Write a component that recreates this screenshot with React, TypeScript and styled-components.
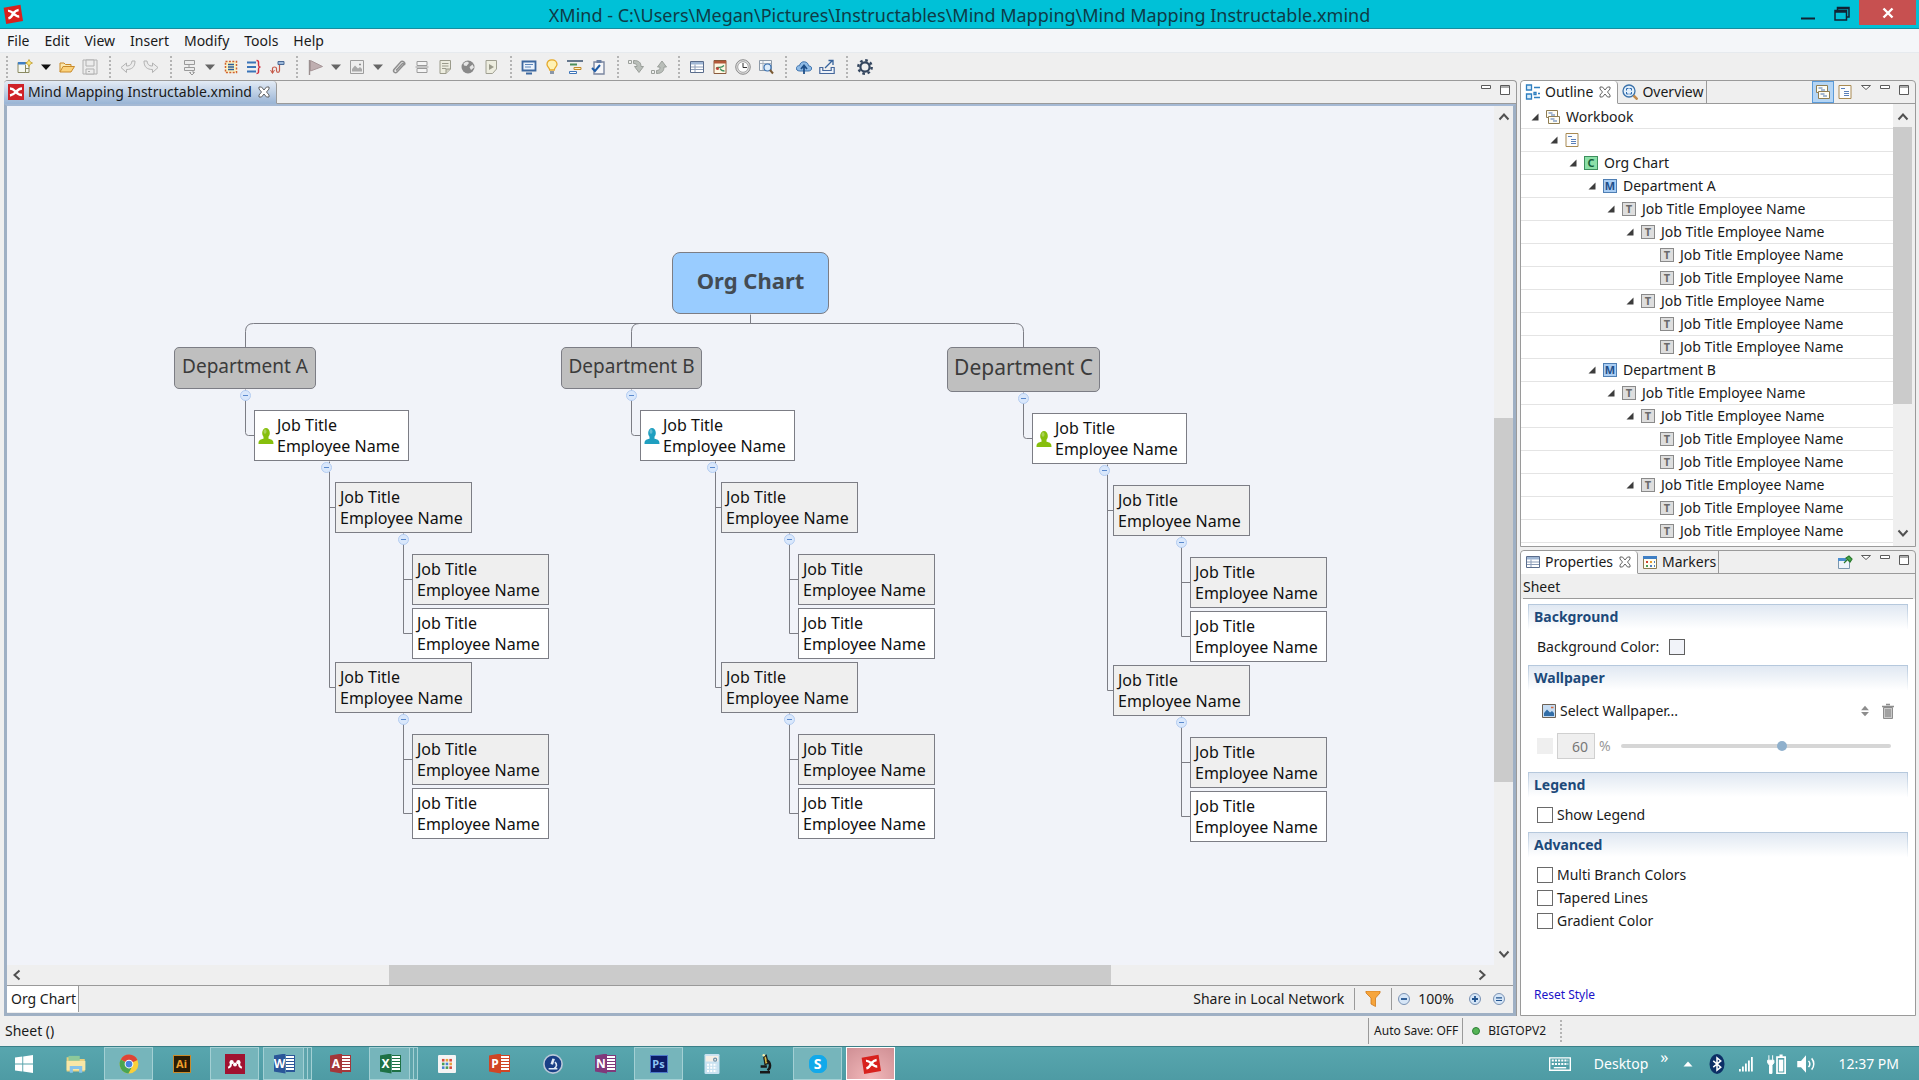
import React from "react";
import styled, { createGlobalStyle, css } from "styled-components";

const GlobalStyle = createGlobalStyle`
  * { box-sizing: border-box; }
  html, body { margin: 0; height: 100%; }
  body {
    font-family: "Noto Sans", "Open Sans", sans-serif;
    font-size: 14px;
    line-height: 20px;
    color: #1a1a1a;
    background: #efefef;
    overflow: hidden;
  }
  button, input {
    font: inherit;
    color: inherit;
    margin: 0;
    padding: 0;
  }
  button { border: 0; background: none; white-space: nowrap; }
  svg { display: block; flex: none; }
  ul, menu { margin: 0; padding: 0; list-style: none; }
`;

const line = "#9a9a9a";

/* ---------- icons ---------- */

const glyphs: Record<string, React.ReactNode> = {
  xmind: (
    <>
      <path d="M.500 3 14 .500l2 13-13.500 2.500z" fill="#d8211d" />
      <path d="M4 5.500c2-.300 3 .800 4.300 2C9.500 5.800 10.500 5 12.500 4.800M4.300 11.500c2-.500 2.800-1.500 4-4 1.700 1.700 2.700 2.700 4.700 2.500" stroke="#fff" strokeWidth="1.900" fill="none" />
    </>
  ),
  xmindSquare: (
    <>
      <path d="M0 0h16v16H0z" fill="#cf2228" />
      <path d="M2 4.500c3 0 4 1.500 6 3.500 2-2.500 3-3.500 6-3.500M2 11.500c3-.500 4-1.500 6-3.500 2 2.500 3 3 6 3" stroke="#fff" strokeWidth="2.400" fill="none" />
    </>
  ),
  newFile: (
    <>
      <path d="M1 3.500h11v10H1z" fill="#f4f7f0" stroke="#8a8a62" />
      <path d="M1 3h8v2.500H1z" fill="#3f7fc4" />
      <path d="M8.500 6v7M9 9.500h3" stroke="#8a8a62" />
      <path d="m12 .500 1.200 2.300L15.500 4l-2.300 1.200L12 7.500l-1.200-2.300L8.500 4l2.300-1.200z" fill="#f9e57a" stroke="#b79420" strokeWidth=".7" />
    </>
  ),
  open: (
    <>
      <path d="M1 13V4h4l1.500 1.500H12V8" fill="#fbe7ae" stroke="#c98a2a" />
      <path d="m1 13 3-5.500h11.500L12 13z" fill="#fbd27c" stroke="#c98a2a" />
    </>
  ),
  save: (
    <g stroke="#b0b0b0" fill="#ececec">
      <path d="M1 1h14v14H1z" />
      <path d="M4 1h8v6H4zM4 10h8v5H4zM6 12.500h2" />
    </g>
  ),
  undo: <path d="M1 8.500 6.500 4v3c4 0 5-2 5.500-5h3c0 6-3 8.500-8.500 8.500v3z" fill="#ececec" stroke="#b3b3b3" />,
  redo: <path d="M15 8.500 9.500 4v3C5.500 7 4.500 5 4 2H1c0 6 3 8.500 8.500 8.500v3z" fill="#ececec" stroke="#b3b3b3" />,
  topic: (
    <g stroke="#9a9a9a" fill="#ececec">
      <path d="M3.500 1.500h10v4h-10zM3.500 8.500h10v3h-10zM8 5.500v3" />
      <path d="M8 11.500h4v2h1.500L11 16l-2.500-2.500H10" />
    </g>
  ),
  boundary: (
    <>
      <path d="M2.500 2.500h11v11h-11z" fill="#fbf3c4" stroke="#d1622d" strokeWidth="1.500" strokeDasharray="2 1.400" />
      <path d="M5 5.500h6M5 8h6M5 10.500h6" stroke="#2d5e99" strokeWidth="1.500" />
    </>
  ),
  summary: (
    <>
      <path d="M1 3.500h9M1 8h9M1 12.500h9" stroke="#3a74b8" strokeWidth="2" />
      <path d="M10.500 1.500c2.500 0 2 1.500 2 3.500s0 3 2 3c-2 0-2 1-2 3s.500 3.500-2 3.500" fill="none" stroke="#cf3040" strokeWidth="1.500" />
    </>
  ),
  relation: (
    <>
      <path d="M3.500 14V9.500c0-2 4-2 4 0v2c0 2.500 3 2.500 3 0V6" fill="none" stroke="#c55a4a" strokeWidth="1.200" />
      <path d="m1.500 11 2 3.500 2-3.500" fill="none" stroke="#c55a4a" />
      <path d="M9 2.500h6v3H9z" fill="#9db9da" stroke="#4a6a96" />
    </>
  ),
  flag: (
    <>
      <path d="M2.500 1v15" stroke="#9a8f8f" strokeWidth="1.400" />
      <path d="m3.500 1.500 12 6-12 4.500z" fill="#bfaeb0" stroke="#a79698" />
    </>
  ),
  picture: (
    <>
      <path d="M1.500 1.500h13v13h-13z" fill="#ededed" stroke="#9d9d9d" />
      <path d="M3 12.500V10l3-3.500 3 3 2-1.500 2 2v2.500z" fill="#a8a8a8" />
      <path d="M10 5.500h2" stroke="#8d8d8d" strokeWidth="1.500" />
    </>
  ),
  wallpaper: (
    <>
      <path d="M1.500 1.500h13v13h-13z" fill="#c6dcf2" stroke="#6d6256" />
      <path d="M3 13v-3l3-3.500 3 3L11 8l2 2v3z" fill="#326ea8" />
      <path d="M10 4.500h2.500" stroke="#d8683c" strokeWidth="1.500" />
    </>
  ),
  clip: (
    <path
      d="m5 11.500 6-6.500c1-1.200 2.300 0 1.300 1.200L6 13c-1.700 1.800-4.500-.300-3-2.500l6.500-7.300c2-2.200 5.500.300 3.800 3"
      fill="none"
      stroke="#8e8e8e"
      strokeWidth="1.500"
    />
  ),
  divider: <path d="M3 2.500h10v4H3zM3 9.500h10v4H3zM1.500 8h13" fill="#f4f4f4" stroke="#9a9a9a" />,
  note: (
    <>
      <path d="M3 1.500h10.500V10L9 14.500H3z" fill="#ededdf" stroke="#9b9b8b" />
      <path d="M5 4.500h6.500M5 7h6.500M5 9.500h4" stroke="#9b9b8b" />
      <path d="M13.500 10H9v4.500" fill="#cfcfc0" stroke="#9b9b8b" />
    </>
  ),
  globe: (
    <>
      <circle cx="8" cy="8" r="6.500" fill="#898989" />
      <path d="M3.500 4.500C6 2 8 2.500 9 4L6.500 7 4 6.500zM9.500 8l3-2.500 1.500 3L11 11z" fill="#e6e6e6" />
    </>
  ),
  audio: (
    <>
      <path d="M3 1.500h10.500V10L9.500 14.500H3z" fill="#ededdf" stroke="#a0a092" />
      <path d="m6 5 5 3-5 3z" fill="#9b9b8b" />
    </>
  ),
  present: (
    <>
      <path d="M1.500 2.500h13v9h-13z" fill="#eaf2fb" stroke="#3c68a0" strokeWidth="1.800" />
      <path d="M4 5.500h8M4 8h6" stroke="#5d86ba" />
      <path d="M5 14.500h6" stroke="#3c68a0" strokeWidth="2" />
    </>
  ),
  bulb: (
    <>
      <path d="M8 .800c3 0 5 2 5 4.500S10.500 8.500 10.300 11H5.700C5.500 8.500 3 8 3 5.300S5 .800 8 .800z" fill="#fff2b4" stroke="#e5a92a" strokeWidth="1.300" />
      <path d="M6 12h4v3H6z" fill="#8b97a8" />
    </>
  ),
  gantt: (
    <>
      <path d="M0 2h16" stroke="#39506e" strokeWidth="1.500" />
      <path d="M3 4.500h7v2H3z" fill="#4c8f5a" />
      <path d="M7 8.500h7v2H7z" fill="#fff1c0" stroke="#c28a2a" />
      <path d="M2.500 12.500h7v2h-7z" fill="#fff" stroke="#3c74b8" />
    </>
  ),
  task: (
    <>
      <path d="M4 3h10v12H4z" fill="#f6f6f8" stroke="#7b87a0" strokeWidth="1.400" />
      <path d="M6.500 1h5v3h-5z" fill="#6a7fa2" />
      <path d="m2 9 3 3 5-6" fill="none" stroke="#1d5ba6" strokeWidth="2" />
    </>
  ),
  drillDown: (
    <g stroke="#9a9f9a" fill="#b9beb9">
      <path d="M.500 1.500h3v3h-3z" fill="none" />
      <path d="M5.500 1.500c5.500 0 7.500 2 7.500 6h2.500l-4.500 6-4.500-6H9c0-2-1-3-3.500-3z" />
    </g>
  ),
  drillUp: (
    <g stroke="#9a9f9a" fill="#b9beb9">
      <path d="M.500 11.500h3v3h-3z" fill="none" />
      <path d="M5.500 14.500c5.500 0 7.500-2.500 7.500-6.500h2.500L11 2 6.500 8H9c0 2.500-1 3.500-3.500 3.500z" />
    </g>
  ),
  table: (
    <>
      <path d="M1.500 2.500h13v11h-13z" fill="#fff" stroke="#5a6d8c" />
      <path d="M2 3h12v2.500H2z" fill="#9fb6d4" />
      <path d="M2 8h12M2 10.500h12M6 5.500V13" stroke="#8c9db8" />
    </>
  ),
  sheetMap: (
    <>
      <path d="M2 1.500h12v13H2z" fill="#fff8e4" stroke="#8a5a3c" />
      <path d="M2 2h12v2.500H2z" fill="#b3593a" />
      <path d="M4 9.500c2-3 4 1 8-3M8 9.500c1 2 2 2.500 4.500 2.500" stroke="#3f8f5f" strokeWidth="1.300" fill="none" />
      <circle cx="5.500" cy="9.500" r="1.500" fill="#c2413a" />
    </>
  ),
  clock: (
    <>
      <circle cx="8" cy="8" r="7.300" fill="#dcdcdc" stroke="#8d8d8d" />
      <circle cx="8" cy="8" r="5.300" fill="#fdfdfd" stroke="#a8a8a8" />
      <path d="M8 4v4.500h4" stroke="#333" fill="none" />
    </>
  ),
  searchSheet: (
    <>
      <path d="M1.500 1.500h12v10h-12z" fill="#f4f6f8" stroke="#8d9aa8" />
      <path d="M2 4.500h11M5 2v9" stroke="#a8b3c0" />
      <circle cx="9.500" cy="8.500" r="3.500" fill="#dcecfb" stroke="#3d74b4" strokeWidth="1.200" />
      <path d="m12 11 3 3.500" stroke="#7a5a34" strokeWidth="2" />
    </>
  ),
  cloud: (
    <>
      <path d="M4 12C1 12 0 10.500.500 8.500 1 7 2.500 6.500 3.500 6.700 4 4 6 2.500 8.500 2.800c2.500.200 3.800 2 4 4C15 7 16 8.500 15.500 10c-.400 1.500-1.500 2-3.500 2z" fill="#8fbbe6" stroke="#3f74ae" />
      <path d="M8 15V7M5 10l3-3.500L11 10" fill="none" stroke="#1f4f88" strokeWidth="1.800" />
    </>
  ),
  share: (
    <>
      <path d="M.800 8.500v6h14.400v-6h-3v3H3.800v-3z" fill="#eef3fa" stroke="#46689c" strokeWidth="1.200" />
      <path d="m6 9 7-7M9.500 1.500H14V6" fill="none" stroke="#35629c" strokeWidth="1.300" />
    </>
  ),
  gear: (
    <g fill="none" stroke="#33455e">
      <circle cx="8" cy="8" r="4.600" strokeWidth="2.200" />
      <circle cx="8" cy="8" r="6.700" strokeWidth="2.400" strokeDasharray="2.600 2.662" />
    </g>
  ),
  outline: (
    <g fill="#d9edfb" stroke="#2f7fc0" strokeWidth="1.300">
      <path d="M1.500 1h5v5h-5zM1.500 10h5v5h-5z" />
      <path d="M9 3.500h6M9 8.500h2v2H9zM13 9.500h2M9 13.500h6" fill="none" />
    </g>
  ),
  overview: (
    <>
      <circle cx="7" cy="7" r="6" fill="#e2effb" stroke="#3b72aa" strokeWidth="1.300" />
      <path d="M4.500 6.500v-2h2M9.500 6.500v-2h-2M4.500 8v2h2M9.500 8v2h-2" fill="none" stroke="#2c6ab0" />
      <path d="m11.500 11.500 4 4" stroke="#c28a4c" strokeWidth="2.500" />
    </>
  ),
  workbook: (
    <>
      <path d="M1.500 1.500h11v7h-11z" fill="#fffdf4" stroke="#8f7d52" />
      <path d="M3.500 7.500h11v7h-11z" fill="#fffdf4" stroke="#8f7d52" />
      <path d="M3.500 4h4M6 6h4M5.500 10h4M8 12h4" stroke="#4c74b0" strokeWidth="1.200" />
    </>
  ),
  sheet: (
    <>
      <path d="M2 1.500h12v13H2z" fill="#fdfdfd" stroke="#a98a52" />
      <path d="M4 4.500h4M7 7.500h5M7 9.500h5M7 11.500h5" stroke="#5a7fb8" />
    </>
  ),
  properties: (
    <>
      <path d="M1.500 2.500h13v11h-13z" fill="#fff" stroke="#5a6d8c" />
      <path d="M2 3h12v2.500H2z" fill="#9fb6d4" />
      <path d="M2 8h12M2 10.500h12M6 5.500V13" stroke="#8c9db8" />
    </>
  ),
  markers: (
    <>
      <path d="M1.500 2.500h13v12h-13z" fill="#fffdf0" stroke="#8a7a52" />
      <path d="M1 2h14v3H1z" fill="#3f7fc4" />
      <path d="M4 7h2v2H4z" fill="#d0402f" />
      <path d="M8 7h2v2H8z" fill="#e59a2d" />
      <path d="M4 11h2v2H4z" fill="#4a9b56" />
      <path d="M8 11h2v2H8zM12 7h1v2h-1zM12 11h1v2h-1z" fill="#4f7fc0" />
    </>
  ),
  pin: (
    <>
      <path d="M1.500 4.500h11v10h-11z" fill="#eef4fb" stroke="#7b97ae" />
      <path d="M1 4h8v3H1z" fill="#4b8fd0" />
      <path d="m7 9 3-3M9 4l4 4 2-3-3-3z" fill="#4aa84a" stroke="#2a7a2e" strokeWidth="1.200" />
    </>
  ),
  closeX: (
    <path d="M3 3h2.500L8 6l2.500-3H13v2L10.500 8l2.500 3v2h-2.500L8 10l-2.500 3H3v-2l2.500-3L3 5z" fill="#fff" stroke="#555" strokeWidth=".9" />
  ),
  minimize: <path d="M3.500 3.500h9v3h-9z" fill="#fff" stroke="#5a5a5a" />,
  maximize: (
    <>
      <path d="M3.500 3.500h9v9h-9z" fill="#fff" stroke="#5a5a5a" />
      <path d="M3.500 5h9" stroke="#5a5a5a" />
    </>
  ),
  viewMenu: <path d="M3.500 3.500h9L8 7.500z" fill="#fff" stroke="#5a5a5a" />,
  caretUp: <path d="m3.500 10.500 4.500-5 4.500 5" fill="none" stroke="#505050" strokeWidth="2" />,
  caretDown: <path d="m3.500 5.500 4.500 5 4.500-5" fill="none" stroke="#505050" strokeWidth="2" />,
  caretLeft: <path d="m10.500 3.500-5 4.500 5 4.500" fill="none" stroke="#505050" strokeWidth="2" />,
  caretRight: <path d="m5.500 3.500 5 4.500-5 4.500" fill="none" stroke="#505050" strokeWidth="2" />,
  dropdown: <path d="M3 5.500h10L8 11z" fill="currentColor" />,
  treeArrow: <path d="M11.500 4.500v7h-7z" fill="#3c3c3c" />,
  spinner: <path d="M3.500 7 8 2l4.500 5zM3.500 9 8 14l4.500-5z" fill="#8d8d8d" />,
  trash: (
    <>
      <path d="M3.500 4.500h9v11h-9z" fill="#c9c9c9" stroke="#8d8d8d" />
      <path d="M2 3.500h12M6 1.500h4M6 6v8M8 6v8M10 6v8" stroke="#8d8d8d" strokeWidth="1.300" />
    </>
  ),
  funnel: <path d="M1 0h14v2L10.500 7v8.500L6 13V7L1 2z" fill="#f6a53c" stroke="#cf7a1a" strokeWidth=".8" />,
  zoomOut: (
    <>
      <circle cx="8" cy="8" r="5.500" fill="#d6e6f7" stroke="#7b93b4" />
      <path d="M5 8h6" stroke="#23548f" strokeWidth="1.800" />
    </>
  ),
  zoomIn: (
    <>
      <circle cx="8" cy="8" r="5.500" fill="#d6e6f7" stroke="#7b93b4" />
      <path d="M5 8h6M8 5v6" stroke="#23548f" strokeWidth="1.800" />
    </>
  ),
  zoomFit: (
    <>
      <circle cx="8" cy="8" r="5.500" fill="#d6e6f7" stroke="#7b93b4" />
      <path d="M5 6.800h6M5 9.500h6" stroke="#23548f" strokeWidth="1.200" />
    </>
  ),
  dot: <circle cx="8" cy="8" r="3.500" fill="#55b455" stroke="#2f7f39" />,
  winMin: <path d="M1 13.500h14" stroke="#123" strokeWidth="2" />,
  winRestore: <path d="M1 5.500h11.500V15H1zM1 7h11.500M3.500 5V2.500H15V12h-2M3.500 3.500H15" fill="none" stroke="#123" strokeWidth="1.500" />,
  winClose: <path d="m3.500 3.500 9 9M12.500 3.500l-9 9" stroke="#fff" strokeWidth="2.400" />,
  person: (
    <>
      <ellipse cx="8" cy="5" rx="3.800" ry="5" />
      <path d="M.500 16c0-3.500 1-4.500 5-5.300V9h5v1.700c4 .800 5 1.800 5 5.300z" />
      <ellipse cx="7" cy="3.500" rx="1.500" ry="2.300" fill="#fff" opacity=".3" />
    </>
  ),
  windows: <path d="M0 2.300 6.500 1.400V7.600H0zM7.300 1.300 16 0v7.600H7.300zM0 8.400h6.500v6.200L0 13.700zM7.300 8.400H16V16l-8.700-1.300z" fill="#fff" />,
  explorer: (
    <>
      <path d="M.500 2.500h6l1 1.500h7.500v10H.500z" fill="#e9cf7c" />
      <path d="M2 1.500h9v4H2z" fill="#8dc99a" />
      <path d="M.500 5.500H15.500v7.500H.500z" fill="#f8e7a6" />
      <path d="M3 9.500h10V15h-2.500v-3h-5v3H3z" fill="#85c3ea" />
    </>
  ),
  chrome: (
    <>
      <circle cx="8" cy="8" r="7.500" fill="#f9cf3a" />
      <path d="M8 8 1.400 4.300A7.600 7.600 0 0 1 14.800 4.700z" fill="#dd4436" />
      <path d="M8 8 1.400 4.300A7.600 7.600 0 0 0 7.500 15.500L10 11z" fill="#4aa550" />
      <circle cx="8" cy="8" r="3.500" fill="#fff" />
      <circle cx="8" cy="8" r="2.700" fill="#4683e0" />
    </>
  ),
  mendeley: (
    <>
      <path d="M0 0h16v16H0z" fill="#a01230" />
      <circle cx="5.300" cy="6.500" r="1.700" fill="#fff" />
      <circle cx="10.700" cy="6.500" r="1.700" fill="#fff" />
      <circle cx="8" cy="8.300" r="1.600" fill="#fff" />
      <path d="M4.500 7c.500 2-.500 3.500-2 4M11.500 7c-.500 2 .500 3.500 2 4" fill="none" stroke="#fff" strokeWidth="1.600" />
    </>
  ),
  apps: (
    <>
      <rect width="16" height="16" rx="1" fill="#f4f4f4" />
      {["#d9483b", "#e9a13b", "#d9483b", "#4a9b56", "#4a80d0", "#e9a13b", "#4a80d0", "#4a9b56", "#d9483b"].map((fill, i) => (
        <rect key={i} x={3.5 + (i % 3) * 3.3} y={3.5 + Math.floor(i / 3) * 3.3} width="2.300" height="2.300" fill={fill} />
      ))}
    </>
  ),
  lab: (
    <>
      <circle cx="8" cy="8" r="7.300" fill="#193f86" stroke="#b9c8d8" strokeWidth="1.300" />
      <path d="m7.500 3.500 2 .500-1.500 4.500-2-.500z" fill="#dfe9f5" />
      <path d="M9.500 6.500c2 1.500 1.500 4-.500 5M4.500 11.800h7" fill="none" stroke="#dfe9f5" strokeWidth="1.300" />
    </>
  ),
  calculator: (
    <>
      <rect x="2" y="0" width="12" height="16" rx="1" fill="#c9e2f1" />
      <path d="M3 1.500h10v4.500H3z" fill="#f7efe6" />
      <path d="M4 8.500h8M4 11h8M4 13.500h8" stroke="#fff" strokeWidth="1.600" strokeDasharray="1.600 1" />
      <circle cx="10.500" cy="4.500" r="1.200" fill="none" stroke="#6d8fa8" />
    </>
  ),
  microscope: (
    <>
      <path d="M7 2.500 9 1l1.500 6.500-2.500 1z" fill="#d9b945" stroke="#1d1d1d" />
      <path d="M9.500 5c3 1.500 3.500 6 .500 8M4.500 10h5M4 14.500h8" fill="none" stroke="#181818" strokeWidth="2" />
      <circle cx="7" cy="1" r="1" fill="#f6f0b0" />
    </>
  ),
  keyboard: (
    <>
      <path d="M.500 3.500h15v9H.500z" fill="none" stroke="#fff" />
      <path d="M2 5.500h12M2 8h12" stroke="#fff" strokeWidth="1.500" strokeDasharray="1.500 .8" />
      <path d="M3.500 10.700h9" stroke="#fff" />
    </>
  ),
  showHidden: <path d="m3.500 10.500 4.500-5 4.500 5z" fill="#fff" />,
  bluetooth: (
    <>
      <ellipse cx="8" cy="8" rx="6" ry="8" fill="#0c2f66" />
      <path d="m5 5.500 6 5L8 13V3l3 2.500-6 5" fill="none" stroke="#fff" strokeWidth="1.200" />
    </>
  ),
  signal: <path d="M1 13h1.800v2.500H1zM4 10.500h1.800v5H4zM7 7.500h1.800v8H7zM10 4.500h1.800v11H10zM13 1h1.800v14.500H13z" fill="#fff" />,
  battery: (
    <>
      <path d="M8 2.500h6.500v13H8zM10 1h2.500" fill="none" stroke="#fff" strokeWidth="1.400" />
      <path d="M9.500 4.500H13V14H9.500z" fill="#fff" />
      <path d="M1.500 1v4M4.500 1v4M.500 5h5v2l-1.500 2v6.500H2V9L.500 7z" fill="#fff" stroke="#fff" strokeWidth=".8" />
    </>
  ),
  volume: (
    <>
      <path d="M1 5.500h3L8 1v14l-4-4.500H1z" fill="#fff" />
      <path d="M10 5.500c1.300 1.500 1.300 3.500 0 5M12.500 3.500c2.300 2.500 2.300 6.500 0 9" fill="none" stroke="#fff" strokeWidth="1.200" />
    </>
  ),
};

const Icon = ({ name, size = 16, fill }: { name: string; size?: number; fill?: string }) => (
  <svg width={size} height={size} viewBox="0 0 16 16" fill={fill} aria-hidden="true">
    {glyphs[name]}
  </svg>
);

/* ---------- window chrome ---------- */

const Desktop = styled.div`
  display: flex;
  flex-direction: column;
  height: 100vh;
`;

const TitleBar = styled.header`
  flex: none;
  display: grid;
  grid-template-columns: 1fr auto 1fr;
  height: 29px;
  padding: 0 3px;
  background: #00c1d7;
  border-bottom: 1px solid #158ea0;
  color: #0e3c47;
`;

const TitleIcon = styled.span`
  padding: 4px 0;
`;

const Title = styled.h1`
  margin: 0;
  font-size: 18px;
  line-height: 30px;
  font-weight: 400;
  white-space: nowrap;
`;

const WindowButtons = styled.div`
  display: flex;
  justify-content: flex-end;
`;

const WindowButton = styled.button<{ $close?: boolean }>`
  display: grid;
  place-items: center;
  width: ${(p) => (p.$close ? 57 : 34)}px;
  height: 25px;
  background: ${(p) => (p.$close ? "#c75050" : "transparent")};
`;

const MenuBar = styled.nav`
  flex: none;
  display: flex;
  gap: 15px;
  height: 24px;
  padding: 0 7px;
  background: #f4f6f9;
  border-bottom: 1px solid #e6eaee;

  button { line-height: 24px; }
`;

const Toolbar = styled.div`
  flex: none;
  display: flex;
  gap: 8px;
  height: 27px;
  padding-left: 6px;
`;

const ToolGroup = styled.div`
  display: flex;
  align-items: center;

  &::before {
    content: "";
    width: 2px;
    height: 22px;
    margin-right: 5px;
    background: repeating-linear-gradient(#b4b4b4 0 2px, transparent 2px 4px);
  }
`;

const ToolButton = styled.button<{ $narrow?: boolean; $dim?: boolean }>`
  display: grid;
  place-items: center;
  width: ${(p) => (p.$narrow ? 19 : 23)}px;
  height: 26px;
  color: ${(p) => (p.$dim ? "#666" : "#111")};
`;

const Workspace = styled.main`
  flex: 1;
  min-height: 0;
  display: flex;
  gap: 3px;
  padding: 0 3px 0 4px;
`;

/* ---------- shared panel parts ---------- */

const TabStrip = styled.div`
  flex: none;
  display: flex;
  height: 23px;
  border-bottom: 1px solid ${line};
`;

const Tab = styled.button<{ $kind?: "editor" | "active" }>`
  display: flex;
  align-items: center;
  gap: 4px;
  height: 23px;
  padding: 0 2px 0 4px;
  border-right: 1px solid ${line};
  border-bottom: 1px solid ${line};
  ${(p) =>
    p.$kind === "active" &&
    css`
      background: #fff;
      border-bottom-color: #fff;
      border-radius: 4px 4px 0 0;
      padding-right: 4px;
    `}
  ${(p) =>
    p.$kind === "editor" &&
    css`
      background: linear-gradient(#e3ebf5, #9cb6d6);
      border-bottom-color: #9cb6d6;
      border-radius: 4px 4px 0 0;
      padding-right: 4px;
    `}
`;

const PanelTools = styled.div`
  display: flex;
  align-items: flex-start;
  margin-left: auto;
  padding-right: 2px;
`;

const PanelButton = styled.button<{ $on?: boolean; $wide?: boolean }>`
  display: grid;
  place-items: center;
  width: ${(p) => (p.$wide ? 22 : 19)}px;
  height: ${(p) => (p.$wide ? 22 : 18)}px;
  border: 1px solid ${(p) => (p.$on ? "#5a9ad8" : "transparent")};
  background: ${(p) => (p.$on ? "#b4d5f5" : "transparent")};
`;

const Scroll = styled.div<{ $horizontal?: boolean }>`
  flex: none;
  display: flex;
  flex-direction: ${(p) => (p.$horizontal ? "row" : "column")};
  ${(p) => (p.$horizontal ? "height: 20px;" : "width: 19px;")}
  background: #efefef;

  button {
    flex: none;
    display: grid;
    place-items: center;
    ${(p) => (p.$horizontal ? "width: 20px;" : "height: 21px;")}
  }
`;

const ScrollPart = styled.span<{ $grow: number; $thumb?: boolean }>`
  flex: ${(p) => p.$grow} 1 0;
  background: ${(p) => (p.$thumb ? "#cbcbcb" : "transparent")};
`;

const ScrollBar = ({ parts, horizontal }: { parts: number[]; horizontal?: boolean }) => (
  <Scroll $horizontal={horizontal}>
    <button aria-label={horizontal ? "Scroll left" : "Scroll up"}>
      <Icon name={horizontal ? "caretLeft" : "caretUp"} />
    </button>
    <ScrollPart $grow={parts[0]} />
    <ScrollPart $grow={parts[1]} $thumb />
    <ScrollPart $grow={parts[2]} />
    <button aria-label={horizontal ? "Scroll right" : "Scroll down"}>
      <Icon name={horizontal ? "caretRight" : "caretDown"} />
    </button>
  </Scroll>
);

/* ---------- editor ---------- */

const Editor = styled.section`
  flex: 1;
  min-width: 0;
  display: flex;
  flex-direction: column;
  border: 1px solid ${line};
  border-width: 1px 1px 0 0;
  border-radius: 4px 4px 0 0;
`;

const EditorFrame = styled.div`
  flex: 1;
  min-height: 0;
  display: flex;
  flex-direction: column;
  border: 3px solid #9fb0c4;
  border-top-color: #a5b9d4;
  border-top-width: 2px;
`;

const CanvasRow = styled.div`
  flex: 1;
  min-height: 0;
  display: flex;
`;

const Canvas = styled.div`
  position: relative;
  flex: 1;
  overflow: hidden;
  background: #f1f3f9;
`;

const ScrollRow = styled.div`
  display: flex;
  padding-right: 21px;
  background: #efefef;

  > div { flex: 1; }
`;

const SheetBar = styled.footer`
  flex: none;
  display: flex;
  height: 28px;
  padding-bottom: 1px;
  border-top: 1px solid ${line};
  background: #efefef;
`;

const SheetTab = styled.button`
  padding: 0 2px 0 4px;
  background: #fff;
  border-right: 1px solid ${line};
`;

const SheetTools = styled.div`
  display: flex;
  align-items: center;
  margin-left: auto;
  padding-right: 2px;
`;

const SheetTool = styled.button<{ $split?: boolean }>`
  display: flex;
  align-items: center;
  height: 22px;
  padding: 0 4px;
  ${(p) =>
    p.$split &&
    css`
      padding: 0 10px;
      border-right: 1px solid ${line};
    `}
`;

const ZoomLevel = styled.output`
  margin: 0 9px 0 2px;
`;

/* ---------- mind map ---------- */

type Kind = "root" | "dept" | "deptLarge" | "white" | "grey";

const Node = styled.div<{ $x: number; $y: number; $w: number; $h: number; $kind: Kind }>`
  position: absolute;
  left: ${(p) => p.$x}px;
  top: ${(p) => p.$y}px;
  width: ${(p) => p.$w}px;
  height: ${(p) => p.$h}px;
  display: flex;
  align-items: center;
  gap: 3px;
  padding-left: 4px;
  border: 1px solid #7c7d85;
  background: ${(p) => (p.$kind === "white" ? "#fff" : "#efefef")};
  color: #111;
  font-size: 16px;
  line-height: 21px;
  white-space: nowrap;

  svg { margin-left: -1px; }

  ${(p) =>
    p.$kind.startsWith("dept") &&
    css`
      justify-content: center;
      padding: 0 0 4px;
      border-radius: 5px;
      background: #bfbfbf;
      color: #3b3b3b;
      font-size: ${p.$kind === "dept" ? 19 : 21}px;
    `}
  ${(p) =>
    p.$kind === "root" &&
    css`
      justify-content: center;
      padding: 0 0 6px;
      border-radius: 8px;
      background: #99ccff;
      color: #434b53;
      font-size: 22px;
      font-weight: 700;
    `}
`;

const Links = styled.svg`
  position: absolute;
  inset: 0;
`;

const Fold = styled.button<{ $x: number; $y: number }>`
  position: absolute;
  left: ${(p) => p.$x - 5}px;
  top: ${(p) => p.$y - 5}px;
  display: grid;
  place-items: center;
  width: 11px;
  height: 11px;
  border: 1px solid #b4cdf2;
  border-radius: 50%;
  background: #d9e7fb;

  &::before {
    content: "";
    width: 5px;
    height: 1px;
    background: #5b8ace;
  }
`;

const Employee = () => (
  <span>
    Job Title
    <br />
    Employee Name
  </span>
);

interface Department {
  name: string;
  x: number;
  drop: number;
  left: number;
  width: number;
  kind: Kind;
  person: string;
}

/* Canvas coordinates; x is the vertical trunk of a department, drop shifts what hangs below it. */
const departments: Department[] = [
  { name: "Department A", x: 238, drop: 0, left: 167, width: 142, kind: "dept", person: "#86bf0d" },
  { name: "Department B", x: 624, drop: 0, left: 554, width: 141, kind: "dept", person: "#1f9fc0" },
  { name: "Department C", x: 1016, drop: 3, left: 940, width: 153, kind: "deptLarge", person: "#86bf0d" },
];

const Branch = ({ dept }: { dept: Department }) => {
  const { x, drop } = dept;
  return (
    <>
      <Node $kind={dept.kind} $x={dept.left} $y={241} $w={dept.width} $h={42 + drop}>
        {dept.name}
      </Node>
      <Fold $x={x} $y={289 + drop} aria-label={`Fold ${dept.name}`} />
      <Node $kind="white" $x={x + 9} $y={304 + drop} $w={155} $h={51}>
        <Icon name="person" fill={dept.person} />
        <Employee />
      </Node>
      <Fold $x={x + 81} $y={361 + drop} aria-label="Fold topic" />
      {[0, 180].map((dy) => (
        <React.Fragment key={dy}>
          <Node $kind="grey" $x={x + 90} $y={376 + drop + dy} $w={137} $h={51}>
            <Employee />
          </Node>
          <Fold $x={x + 158} $y={433 + drop + dy} aria-label="Fold topic" />
          <Node $kind="grey" $x={x + 167} $y={448 + drop + dy} $w={137} $h={51}>
            <Employee />
          </Node>
          <Node $kind="white" $x={x + 167} $y={502 + drop + dy} $w={137} $h={51}>
            <Employee />
          </Node>
        </React.Fragment>
      ))}
    </>
  );
};

const branchPath = ({ x, drop }: Department) => {
  const sub = [0, 180]
    .map((dy) => `M${x + 158} ${427 + drop + dy}v100h9M${x + 158} ${473 + drop + dy}h9`)
    .join("");
  return `M${x} ${283 + drop}v43q0 3 3 3h6M${x + 84} ${355 + drop}v226h6M${x + 84} ${401 + drop}h6${sub}`;
};

const MindMap = () => (
  <Canvas>
    <Links width="1300" height="760" fill="none" stroke="#7c7d85">
      <g transform="translate(.5 .5)">
        <path d="M743 208v9M238 241v-16q0-8 8-8h762q8 0 8 8v16M624 241v-16q0-8 8-8" />
        {departments.map((d) => (
          <path key={d.name} d={branchPath(d)} />
        ))}
      </g>
    </Links>
    <Node $kind="root" $x={665} $y={146} $w={157} $h={62}>
      Org Chart
    </Node>
    {departments.map((d) => (
      <Branch key={d.name} dept={d} />
    ))}
  </Canvas>
);

/* ---------- side views ---------- */

const Side = styled.aside`
  flex: none;
  display: flex;
  flex-direction: column;
  gap: 3px;
  width: 396px;
`;

const Panel = styled.section<{ $grow?: boolean }>`
  display: flex;
  flex-direction: column;
  min-height: 0;
  ${(p) => p.$grow && "flex: 1;"}
  border: 1px solid ${line};
  border-radius: 4px 4px 0 0;
`;

const TreeArea = styled.div`
  display: flex;
  padding: 2px 3px 3px 0;
  background: linear-gradient(to left, #efefef 22px, #fff 22px);
`;

const Tree = styled.ul`
  flex: 1;
`;

const TreeRow = styled.li<{ $level: number }>`
  display: flex;
  align-items: center;
  height: 23px;
  padding-left: ${(p) => 6 + p.$level * 19}px;
  border-bottom: 1px solid #e4e4e4;
  background: #fff;
  white-space: nowrap;
`;

const Twisty = styled.span`
  width: 16px;
  margin-right: 2px;
`;

const RowIcon = styled.span`
  width: 16px;
  margin-right: 5px;
`;

const Letter = styled.span<{ $tone: "C" | "M" | "T" }>`
  display: grid;
  place-items: center;
  width: 14px;
  height: 14px;
  margin: 0 6px 0 1px;
  border: 1px solid ${(p) => ({ C: "#3d8f5d", M: "#4f7fb4", T: "#8a8a8a" })[p.$tone]};
  background: ${(p) => ({ C: "#8ce0a8", M: "#a9cdf3", T: "#dedede" })[p.$tone]};
  color: ${(p) => ({ C: "#14603a", M: "#1f4f8b", T: "#6b6b6b" })[p.$tone]};
  font-size: 11px;
  font-weight: 700;
  line-height: 12px;
`;

const job = "Job Title Employee Name";
const team: [number, string, string][] = [
  [4, "T", job],
  [5, "T", job],
  [6, "T", job],
  [6, "T", job],
  [5, "T", job],
  [6, "T", job],
  [6, "T", job],
];
const outlineRows: [number, string, string][] = [
  [0, "workbook", "Workbook"],
  [1, "sheet", ""],
  [2, "C", "Org Chart"],
  [3, "M", "Department A"],
  ...team,
  [3, "M", "Department B"],
  ...team,
];

const SheetLabel = styled.div`
  margin: 0 2px;
  padding-top: 1px;
  line-height: 23px;
  border-bottom: 1px solid ${line};
`;

const Form = styled.form`
  flex: 1;
  display: flex;
  flex-direction: column;
  padding: 5px 7px 11px;
  background: #fff;
`;

const SectionHead = styled.h2`
  height: 25px;
  margin: 0;
  padding-left: 5px;
  border: 1px solid #b4c7dc;
  border-bottom: 0;
  border-image: linear-gradient(#b4c7dc, #fff) 1;
  background: linear-gradient(#e0e8f2, #fff);
  color: #1d4a7a;
  font-size: 14px;
  line-height: 24px;
`;

const SectionBody = styled.div`
  padding: 6px 9px 6px;
`;

const Row = styled.div<{ $h?: number }>`
  display: flex;
  align-items: center;
  gap: 4px;
  height: ${(p) => p.$h ?? 23}px;
`;

const Check = styled.input<{ $blank?: boolean }>`
  appearance: none;
  width: 16px;
  height: 16px;
  border: 1px solid ${(p) => (p.$blank ? "#efefef" : "#6a6a6a")};
  background: ${(p) => (p.$blank ? "#efefef" : "#fff")};
`;

const Swatch = styled.button`
  width: 16px;
  height: 16px;
  margin-left: 6px;
  border: 1px solid #5f5f5f;
  background: #f1f3f9;
`;

const WallpaperButton = styled.button`
  display: flex;
  flex: 1;
  align-items: center;
  gap: 3px;
  padding-left: 4px;

  svg:last-child { margin-left: auto; }
`;

const Percent = styled.input`
  width: 38px;
  height: 26px;
  padding-right: 6px;
  border: 1px solid #d0d0d0;
  background: #efefef;
  color: #777;
  text-align: right;
`;

const Unit = styled.label`
  color: #999;
  margin-right: 6px;
`;

const Slider = styled.input`
  appearance: none;
  flex: 1;
  height: 4px;
  margin-right: 8px;
  border-radius: 2px;
  background: #d6d6d6;

  &::-webkit-slider-thumb {
    appearance: none;
    width: 10px;
    height: 10px;
    border-radius: 50%;
    background: #8fb0cc;
  }
`;

const ResetLink = styled.a`
  margin: auto 0 0 6px;
  color: #1a12c8;
  font-size: 12px;
  line-height: 18px;
  text-decoration: none;
`;

const CheckRow = ({ id, label }: { id: string; label: string }) => (
  <Row>
    <Check type="checkbox" id={id} />
    <label htmlFor={id}>{label}</label>
  </Row>
);

/* ---------- status bar and taskbar ---------- */

const StatusBar = styled.footer`
  flex: none;
  display: flex;
  align-items: center;
  height: 30px;
  padding: 0 357px 0 5px;
`;

const StatusCell = styled.div<{ $first?: boolean }>`
  display: flex;
  align-items: center;
  gap: 4px;
  height: 26px;
  padding: 0 4px 0 5px;
  border-left: 1px solid ${line};
  font-size: 12px;
  ${(p) => p.$first && "margin-left: auto;"}
`;

const StatusGrip = styled.span`
  width: 2px;
  height: 22px;
  margin-left: 10px;
  background: repeating-linear-gradient(#b4b4b4 0 2px, transparent 2px 4px);
`;

const TaskBar = styled.footer`
  flex: none;
  display: flex;
  height: 34px;
  border-top: 1px solid #3a7f88;
  background: linear-gradient(#58a6ae, #4e9ba4);
  color: #fff;
`;

const TaskList = styled.div`
  display: flex;
  gap: 4px;
`;

const TaskButton = styled.button<{ $state?: "open" | "current"; $stack?: boolean }>`
  display: grid;
  place-items: center;
  width: 49px;
  height: 33px;

  &:first-child { width: 47px; }

  ${(p) =>
    p.$state === "open" &&
    css`
      border: 1px solid #a3d0d4;
      background: #76b5bb;
    `}
  ${(p) =>
    p.$state === "current" &&
    css`
      border: 1px solid #fff;
      background: radial-gradient(circle at 50% 100%, #f3b9bb, #cf8f94);
    `}
  ${(p) =>
    p.$stack &&
    css`
      padding-right: 7px;
      box-shadow: inset -3px 0 #5ea5ac, inset -4px 0 #a3d0d4, inset -7px 0 #5ea5ac, inset -8px 0 #a3d0d4;
    `}
`;

const AppTile = styled.span<{ $bg: string; $fg?: string; $edge?: string; $round?: boolean }>`
  display: grid;
  place-items: center;
  width: 18px;
  height: 18px;
  border: 1px solid ${(p) => p.$edge ?? p.$bg};
  border-radius: ${(p) => (p.$round ? 7 : 0)}px;
  background: ${(p) => p.$bg};
  color: ${(p) => p.$fg ?? "#fff"};
  font-size: ${(p) => (p.$round ? 14 : 11)}px;
  font-weight: 700;
  line-height: 16px;
`;

const OfficeIcon = styled.span<{ $color: string }>`
  display: flex;
  align-items: center;
  color: #fff;
  font-size: 12px;
  font-weight: 700;

  &::before {
    content: attr(data-letter);
    width: 12px;
    height: 20px;
    line-height: 20px;
    text-align: center;
    background: ${(p) => p.$color};
    clip-path: polygon(0 10%, 100% 0, 100% 100%, 0 90%);
  }

  &::after {
    content: "";
    width: 8px;
    height: 15px;
    border: 1px solid ${(p) => p.$color};
    border-left: 0;
    background: repeating-linear-gradient(#fff 0 2px, ${(p) => p.$color} 2px 3px);
  }
`;

const Tray = styled.div`
  display: flex;
  align-items: center;
  margin-left: auto;
`;

const TrayButton = styled.button<{ $pad: number; $raised?: boolean }>`
  padding: 0 ${(p) => p.$pad}px;
  ${(p) => p.$raised && "align-self: flex-start; font-size: 16px;"}
`;

const tools: string[][] = [
  ["newFile", "drop", "open", "save"],
  ["undo", "redo"],
  ["topic", "dropDim", "boundary", "summary", "relation"],
  ["flag", "dropDim", "picture", "dropDim", "clip", "divider", "note", "globe", "audio"],
  ["present", "bulb", "gantt", "task"],
  ["drillDown", "drillUp"],
  ["table", "sheetMap", "clock", "searchSheet"],
  ["cloud", "share"],
  ["gear"],
];

const tasks: { label: string; state?: "open" | "current"; stack?: boolean; art: React.ReactNode }[] = [
  { label: "Start", art: <Icon name="windows" size={18} /> },
  { label: "File Explorer", art: <Icon name="explorer" size={20} /> },
  { label: "Chrome", state: "open", art: <Icon name="chrome" size={20} /> },
  { label: "Illustrator", art: <AppTile $bg="#2a1c05" $fg="#f0a02c" $edge="#c98a2a">Ai</AppTile> },
  { label: "Mendeley", state: "open", art: <Icon name="mendeley" size={20} /> },
  { label: "Word", state: "open", stack: true, art: <OfficeIcon $color="#2a5699" data-letter="W" /> },
  { label: "Access", art: <OfficeIcon $color="#a4373a" data-letter="A" /> },
  { label: "Excel", state: "open", stack: true, art: <OfficeIcon $color="#1e7145" data-letter="X" /> },
  { label: "Apps", art: <Icon name="apps" size={18} /> },
  { label: "PowerPoint", art: <OfficeIcon $color="#d04525" data-letter="P" /> },
  { label: "Lab", art: <Icon name="lab" size={20} /> },
  { label: "OneNote", art: <OfficeIcon $color="#80397b" data-letter="N" /> },
  { label: "Photoshop", state: "open", art: <AppTile $bg="#0c1c68" $fg="#8ec5f5" $edge="#4c78c8">Ps</AppTile> },
  { label: "Calculator", art: <Icon name="calculator" size={20} /> },
  { label: "Microscope", art: <Icon name="microscope" size={20} /> },
  { label: "Skype", state: "open", art: <AppTile $bg="#12a9ea" $round>S</AppTile> },
  { label: "XMind", state: "current", art: <Icon name="xmind" size={20} /> },
];

const ViewButtons = ({ menu }: { menu?: boolean }) => (
  <>
    {menu && (
      <PanelButton aria-label="View menu">
        <Icon name="viewMenu" />
      </PanelButton>
    )}
    <PanelButton aria-label="Minimize">
      <Icon name="minimize" />
    </PanelButton>
    <PanelButton aria-label="Maximize">
      <Icon name="maximize" />
    </PanelButton>
  </>
);

export default function App() {
  return (
    <Desktop>
      <GlobalStyle />
      <TitleBar>
        <TitleIcon>
          <Icon name="xmind" size={20} />
        </TitleIcon>
        <Title>XMind - C:\Users\Megan\Pictures\Instructables\Mind Mapping\Mind Mapping Instructable.xmind</Title>
        <WindowButtons>
          <WindowButton aria-label="Minimize"><Icon name="winMin" /></WindowButton>
          <WindowButton aria-label="Restore"><Icon name="winRestore" /></WindowButton>
          <WindowButton $close aria-label="Close"><Icon name="winClose" /></WindowButton>
        </WindowButtons>
      </TitleBar>

      <MenuBar>
        {["File", "Edit", "View", "Insert", "Modify", "Tools", "Help"].map((m) => (
          <button key={m}>{m}</button>
        ))}
      </MenuBar>

      <Toolbar>
        {tools.map((group, g) => (
          <ToolGroup key={g}>
            {group.map((t, i) =>
              t.startsWith("drop") ? (
                <ToolButton key={i} $narrow $dim={t === "dropDim"} aria-label="More">
                  <Icon name="dropdown" />
                </ToolButton>
              ) : (
                <ToolButton key={i} aria-label={t}>
                  <Icon name={t} />
                </ToolButton>
              )
            )}
          </ToolGroup>
        ))}
      </Toolbar>

      <Workspace>
        <Editor>
          <TabStrip>
            <Tab $kind="editor">
              <Icon name="xmindSquare" />
              Mind Mapping Instructable.xmind
              <Icon name="closeX" />
            </Tab>
            <PanelTools>
              <ViewButtons />
            </PanelTools>
          </TabStrip>
          <EditorFrame>
            <CanvasRow>
              <MindMap />
              <ScrollBar parts={[291, 365, 162]} />
            </CanvasRow>
            <ScrollRow>
              <ScrollBar horizontal parts={[362, 722, 361]} />
            </ScrollRow>
            <SheetBar>
              <SheetTab>Org Chart</SheetTab>
              <SheetTools>
                <SheetTool $split>Share in Local Network</SheetTool>
                <SheetTool $split aria-label="Filter"><Icon name="funnel" /></SheetTool>
                <SheetTool aria-label="Zoom out"><Icon name="zoomOut" /></SheetTool>
                <ZoomLevel>100%</ZoomLevel>
                <SheetTool aria-label="Zoom in"><Icon name="zoomIn" /></SheetTool>
                <SheetTool aria-label="Actual size"><Icon name="zoomFit" /></SheetTool>
              </SheetTools>
            </SheetBar>
          </EditorFrame>
        </Editor>

        <Side>
          <Panel>
            <TabStrip>
              <Tab $kind="active">
                <Icon name="outline" />
                Outline
                <Icon name="closeX" />
              </Tab>
              <Tab>
                <Icon name="overview" />
                Overview
              </Tab>
              <PanelTools>
                <PanelButton $on $wide aria-label="Show workbook"><Icon name="workbook" /></PanelButton>
                <PanelButton $wide aria-label="Show sheet"><Icon name="sheet" /></PanelButton>
                <ViewButtons menu />
              </PanelTools>
            </TabStrip>
            <TreeArea>
              <Tree role="tree">
                {outlineRows.map(([level, icon, text], i) => (
                  <TreeRow key={i} $level={level} role="treeitem" aria-level={level + 1}>
                    <Twisty>{level < 6 && <Icon name="treeArrow" />}</Twisty>
                    {icon.length === 1 ? (
                      <Letter $tone={icon as "C" | "M" | "T"}>{icon}</Letter>
                    ) : (
                      <RowIcon><Icon name={icon} /></RowIcon>
                    )}
                    {text}
                  </TreeRow>
                ))}
              </Tree>
              <ScrollBar parts={[0, 278, 118]} />
            </TreeArea>
          </Panel>

          <Panel $grow>
            <TabStrip>
              <Tab $kind="active">
                <Icon name="properties" />
                Properties
                <Icon name="closeX" />
              </Tab>
              <Tab>
                <Icon name="markers" />
                Markers
              </Tab>
              <PanelTools>
                <PanelButton $wide aria-label="Pin"><Icon name="pin" /></PanelButton>
                <ViewButtons menu />
              </PanelTools>
            </TabStrip>
            <SheetLabel>Sheet</SheetLabel>
            <Form>
              <SectionHead>Background</SectionHead>
              <SectionBody>
                <Row $h={24}>
                  <label htmlFor="bg-color">Background Color:</label>
                  <Swatch type="button" id="bg-color" />
                </Row>
              </SectionBody>
              <SectionHead>Wallpaper</SectionHead>
              <SectionBody>
                <Row $h={30}>
                  <WallpaperButton type="button">
                    <Icon name="wallpaper" />
                    Select Wallpaper...
                    <Icon name="spinner" size={14} />
                  </WallpaperButton>
                  <ToolButton type="button" aria-label="Delete wallpaper"><Icon name="trash" /></ToolButton>
                </Row>
                <Row $h={40}>
                  <Check $blank type="checkbox" disabled aria-label="Use opacity" />
                  <Percent id="opacity" disabled defaultValue="60" />
                  <Unit htmlFor="opacity">%</Unit>
                  <Slider type="range" disabled min={0} max={100} defaultValue={60} aria-label="Opacity" />
                </Row>
              </SectionBody>
              <SectionHead>Legend</SectionHead>
              <SectionBody>
                <CheckRow id="legend" label="Show Legend" />
              </SectionBody>
              <SectionHead>Advanced</SectionHead>
              <SectionBody>
                <CheckRow id="multi" label="Multi Branch Colors" />
                <CheckRow id="tapered" label="Tapered Lines" />
                <CheckRow id="gradient" label="Gradient Color" />
              </SectionBody>
              <ResetLink href="#reset">Reset Style</ResetLink>
            </Form>
          </Panel>
        </Side>
      </Workspace>

      <StatusBar>
        Sheet ()
        <StatusCell $first>Auto Save: OFF</StatusCell>
        <StatusCell>
          <Icon name="dot" />
          BIGTOPV2
        </StatusCell>
        <StatusGrip />
      </StatusBar>

      <TaskBar>
        <TaskList>
          {tasks.map((t) => (
            <TaskButton key={t.label} $state={t.state} $stack={t.stack} aria-label={t.label}>
              {t.art}
            </TaskButton>
          ))}
        </TaskList>
        <Tray>
          <TrayButton $pad={17} aria-label="Keyboard"><Icon name="keyboard" size={22} /></TrayButton>
          <TrayButton $pad={6}>Desktop</TrayButton>
          <TrayButton $pad={6} $raised aria-label="More toolbars">»</TrayButton>
          <TrayButton $pad={6} aria-label="Show hidden icons"><Icon name="showHidden" /></TrayButton>
          <TrayButton $pad={5} aria-label="Bluetooth"><Icon name="bluetooth" size={20} /></TrayButton>
          <TrayButton $pad={6} aria-label="Network"><Icon name="signal" /></TrayButton>
          <TrayButton $pad={7} aria-label="Power"><Icon name="battery" size={20} /></TrayButton>
          <TrayButton $pad={2} aria-label="Volume"><Icon name="volume" size={20} /></TrayButton>
          <TrayButton $pad={20}>12:37 PM</TrayButton>
        </Tray>
      </TaskBar>
    </Desktop>
  );
}
